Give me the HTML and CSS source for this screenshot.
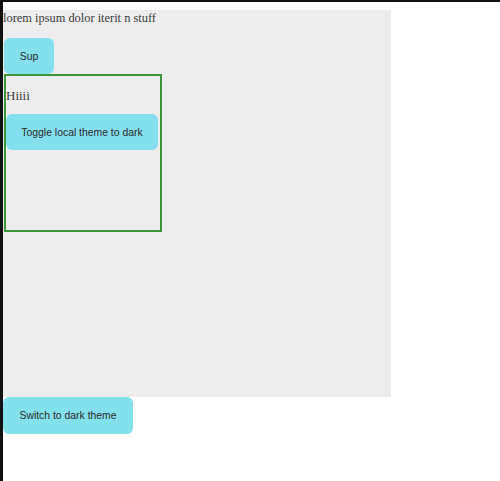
FILE: index.html
```html
<!DOCTYPE html>
<html>
<head>
<meta charset="utf-8">
<link rel="stylesheet" href="styles.css">
</head>
<body>
<div class="frame">
  <div class="panel">
    <p class="lead">lorem ipsum dolor iterit n stuff</p>
    <button class="btn btn-sup">Sup</button>
    <div class="local">
      <p class="hi">Hiiii</p>
      <button class="btn btn-toggle">Toggle local theme to dark</button>
    </div>
  </div>
  <button class="btn btn-switch">Switch to dark theme</button>
</div>
</body>
</html>
```
FILE: styles.css
```css
html, body {
  margin: 0;
  padding: 0;
  background: #ffffff;
}
.frame {
  box-sizing: border-box;
  width: 500px;
  height: 481px;
  border-top: 2px solid #111;
  border-left: 3px solid #111;
  padding-top: 8px;
  display: flex;
  flex-direction: column;
  align-items: flex-start;
}
.panel {
  width: 388px;
  height: 387px;
  background: #ededed;
  display: flex;
  flex-direction: column;
  align-items: flex-start;
}
.lead {
  margin: 0;
  font-family: "Liberation Serif", serif;
  font-size: 12.4px;
  line-height: 15px;
  color: #3a3a3a;
  padding-top: 1px;
}
.btn {
  border: none;
  background: #85e0ee;
  border-radius: 6px;
  font-family: "Liberation Sans", Arial, sans-serif;
  font-size: 10.4px;
  color: #2a2a2a;
  padding: 0;
}
.btn-sup {
  margin-top: 12px;
  margin-left: 1px;
  width: 50px;
  height: 36px;
}
.local {
  box-sizing: border-box;
  margin-left: 1px;
  width: 158px;
  height: 158px;
  border: 2px solid #3a943a;
}
.hi {
  margin: 0;
  padding-top: 12px;
  font-family: "Liberation Serif", serif;
  font-size: 13px;
  line-height: 15px;
  color: #3a3a3a;
}
.btn-toggle {
  margin-top: 11px;
  width: 152px;
  height: 36px;
}
.btn-switch {
  width: 130px;
  height: 37px;
}
```
